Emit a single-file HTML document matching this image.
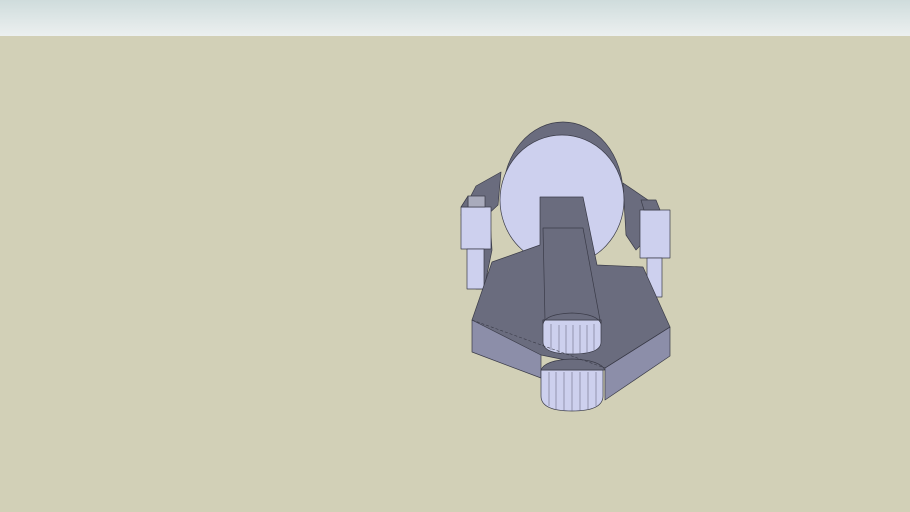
<!DOCTYPE html>
<html><head><meta charset="utf-8"><style>
html,body{margin:0;padding:0;width:910px;height:512px;overflow:hidden;background:#d2d0b7}
svg{display:block}
</style></head><body>
<svg width="910" height="512" viewBox="0 0 910 512" xmlns="http://www.w3.org/2000/svg">
<defs><linearGradient id="sky" x1="0" y1="0" x2="0" y2="1">
<stop offset="0" stop-color="#cfdcdc"/><stop offset="1" stop-color="#ecf0f0"/></linearGradient></defs>
<rect x="0" y="0" width="910" height="36" fill="url(#sky)"/>
<rect x="0" y="36" width="910" height="476" fill="#d2d0b7"/>
<g stroke="#3a3b48" stroke-width="0.7" stroke-linejoin="round">
<polygon points="501,172 476,186 461,215 470,222 484,218 498,205" fill="#6a6c7e"/>
<polygon points="476,220 490,220 492,250 484,289 476,289" fill="#6a6c7e"/>
<polygon points="623,183 648,200 665,220 655,230 636,250 626,235" fill="#6a6c7e"/>
<ellipse cx="563" cy="194" rx="60" ry="72" fill="#6a6c7e"/>
<ellipse cx="562" cy="200" rx="62" ry="65" fill="#cdd0ee"/>
<rect x="461" y="207" width="30" height="42" fill="#cdd0ee"/>
<polygon points="468,196 485,196 485,207 468,207" fill="#a9abbc"/>
<polygon points="461,207 468,196 468,207" fill="#6a6c7e"/>
<rect x="467" y="249" width="17" height="40" fill="#cdd0ee"/>
<rect x="640" y="210" width="30" height="48" fill="#cdd0ee"/>
<polygon points="641,200 656,200 660,210 644,210" fill="#6a6c7e"/>
<rect x="647" y="258" width="15" height="39" fill="#cdd0ee"/>
<polygon points="472,320 541,352 541,378 472,352" fill="#8c8ea9"/>
<polygon points="605,368 670,327 670,356 605,400" fill="#8c8ea9"/>
<polygon points="492,262 540,245 540,197 583,197 597,265 643,267 670,327 605,368 541,355 472,320" fill="#6a6c7e"/>
<path d="M541,370 L603,370 L603,396 Q603,411 572,411 Q541,411 541,396 Z" fill="#cdd0ee"/>
<path d="M541,370 Q545,360 572,359 Q600,360 605,370 Z" fill="#6a6c7e"/>
<polygon points="543,228 583,228 600,320 545,320" fill="#6a6c7e"/>
<path d="M543,320 L601,320 L601,342 Q601,354 572,354 Q543,354 543,342 Z" fill="#cdd0ee"/>
<path d="M543,324 Q545,314 572,313 Q598,314 601,324 L601,320 L543,320Z" fill="#6a6c7e"/>
</g>
<g stroke="#6c6e86" stroke-width="0.6">
<line x1="551" y1="324" x2="551" y2="350"/><line x1="559" y1="325" x2="559" y2="353"/><line x1="566" y1="325" x2="566" y2="354"/><line x1="573" y1="325" x2="573" y2="354"/><line x1="580" y1="325" x2="580" y2="354"/><line x1="587" y1="325" x2="587" y2="353"/><line x1="594" y1="324" x2="594" y2="350"/>
<line x1="549" y1="372" x2="549" y2="406"/><line x1="556" y1="372" x2="556" y2="409"/><line x1="564" y1="372" x2="564" y2="410"/><line x1="572" y1="372" x2="572" y2="411"/><line x1="580" y1="372" x2="580" y2="410"/><line x1="588" y1="372" x2="588" y2="409"/><line x1="596" y1="372" x2="596" y2="406"/>
<line x1="472" y1="320" x2="605" y2="368" stroke-dasharray="3,2" stroke="#3a3b48"/>
<line x1="605" y1="368" x2="670" y2="327" stroke="#3a3b48"/>
</g>
</svg>
</body></html>
